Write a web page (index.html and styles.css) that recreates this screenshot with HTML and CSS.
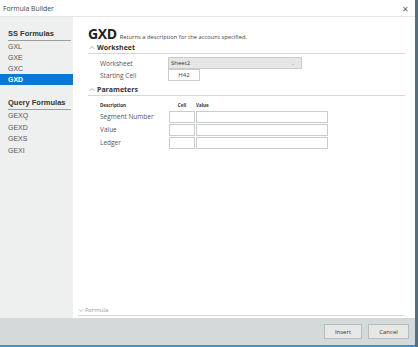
FILE: index.html
```html
<!DOCTYPE html>
<html lang="en">
<head>
    <meta charset="UTF-8">
    <title>Formula Builder</title>
    <link rel="stylesheet" href="styles.css">
</head>
<body>
    <div class="dialog">
        <div class="titlebar">
            <span class="title">Formula Builder</span>
            <span class="close">&#x2715;</span>
        </div>
        <div class="body">
            <aside class="sidebar">
                <div class="group-title">SS Formulas</div>
                <ul class="list">
                    <li>GXL</li>
                    <li>GXE</li>
                    <li>GXC</li>
                    <li class="active">GXD</li>
                </ul>
                <div class="group-title second">Query Formulas</div>
                <ul class="list tall">
                    <li>GEXQ</li>
                    <li>GEXD</li>
                    <li>GEXS</li>
                    <li>GEXI</li>
                </ul>
            </aside>
            <main class="main">
                <div class="heading">
                    <span class="fname">GXD</span>
                    <span class="fdesc">Returns a description for the account specified.</span>
                </div>

                <div class="section-head">
                    <svg class="caret" width="8" height="5" viewBox="0 0 8 5"><path d="M1.5 4 L4 1.5 L6.5 4" fill="none" stroke="#999" stroke-width="0.8"/></svg>Worksheet
                </div>
                <div class="field-row first">
                    <label>Worksheet</label>
                    <div class="select">Sheet2<span class="arrow">&#x2304;</span></div>
                </div>
                <div class="field-row">
                    <label>Starting Cell</label>
                    <div class="cell-input">H42</div>
                </div>

                <div class="section-head">
                    <svg class="caret" width="8" height="5" viewBox="0 0 8 5"><path d="M1.5 4 L4 1.5 L6.5 4" fill="none" stroke="#999" stroke-width="0.8"/></svg>Parameters
                </div>
                <div class="params">
                    <div class="ph">Description</div>
                    <div class="ph center">Cell</div>
                    <div class="ph">Value</div>

                    <div class="pl">Segment Number</div>
                    <div class="box"></div>
                    <div class="box"></div>

                    <div class="pl">Value</div>
                    <div class="box"></div>
                    <div class="box"></div>

                    <div class="pl">Ledger</div>
                    <div class="box"></div>
                    <div class="box"></div>
                </div>

                <div class="spacer"></div>
                <div class="formula-bar">
                    <svg class="caret" width="6" height="5" viewBox="0 0 6 5"><path d="M1 1.5 L3 3.5 L5 1.5" fill="none" stroke="#aaa" stroke-width="0.8"/></svg>Formula
                </div>
            </main>
        </div>
        <div class="footer">
            <button class="btn">Insert</button>
            <button class="btn">Cancel</button>
        </div>
    </div>
</body>
</html>
```

FILE: styles.css
```css
/* Base */
body {
    margin: 0;
    padding: 0;
    font-family: "Open Sans", "Noto Sans", Arial, sans-serif;
    background: #5a6f7c;
    color: #333;
}

.dialog {
    width: 415px;
    height: 345px;
    border-bottom: 2px solid #3f8fd0;
    background: #fff;
    display: flex;
    flex-direction: column;
}

/* Title bar */
.titlebar {
    height: 16px;
    display: flex;
    align-items: center;
    justify-content: space-between;
    padding: 0 6px 0 3px;
    background: #fff;
    border-bottom: 1px solid #e6e8e8;
}

.title {
    font-size: 6.8px;
    color: #444;
}

.close {
    font-size: 8px;
    color: #666;
}

.body {
    flex: 1;
    display: flex;
    min-height: 0;
}

/* Sidebar */
.sidebar {
    width: 73px;
    background: #eef0ef;
    padding-top: 12px;
}

.group-title {
    font-family: "Liberation Sans", Arial, sans-serif;
    font-weight: bold;
    font-size: 7.5px;
    color: #333;
    margin: 0 2px 0 8px;
    padding-bottom: 2px;
    border-bottom: 1px solid #9aa0a0;
}

.group-title.second {
    margin-top: 13px;
}

.list {
    list-style: none;
    margin: 0;
    padding: 0;
}

.list li {
    font-family: "Liberation Sans", Arial, sans-serif;
    font-size: 7px;
    color: #555;
    height: 11px;
    line-height: 11px;
    padding-left: 8px;
}

.list.tall li {
    height: 11.5px;
    line-height: 11.5px;
}

.list li.active {
    background: #0a78d4;
    color: #fff;
    font-weight: bold;
}

/* Main area */
.main {
    flex: 1;
    display: flex;
    flex-direction: column;
    padding: 9px 10px 0 5px;
}

.heading {
    display: flex;
    align-items: baseline;
    padding-left: 10px;
    height: 16px;
    line-height: 16px;
}

.fname {
    font-size: 14px;
    font-weight: bold;
    color: #222;
    letter-spacing: -0.4px;
}

.fdesc {
    font-size: 5.8px;
    color: #444;
    margin-left: 3px;
}

.section-head {
    display: flex;
    align-items: center;
    font-size: 7px;
    font-weight: bold;
    color: #333;
    margin-left: 10px;
    border-bottom: 1px solid #d4d8d8;
    height: 11px;
}

.caret {
    flex: none;
    margin-right: 1px;
}

.field-row {
    display: flex;
    align-items: center;
    height: 12px;
    margin-left: 22px;
}

.field-row.first {
    margin-top: 3px;
}

.field-row label {
    width: 68px;
    font-size: 6.5px;
    color: #555;
}

.select {
    width: 130px;
    height: 10px;
    line-height: 10px;
    border: 1px solid #c8cccc;
    background: #e6e6e6;
    font-size: 6px;
    color: #333;
    padding-left: 2px;
    display: flex;
    justify-content: space-between;
}

.arrow {
    font-size: 5px;
    color: #999;
    padding-right: 6px;
}

.cell-input {
    width: 30px;
    height: 10px;
    line-height: 10px;
    border: 1px solid #c8cccc;
    font-size: 6px;
    text-align: center;
    color: #444;
}

.field-row + .section-head {
    margin-top: 3px;
}

/* Parameters grid */
.params {
    display: grid;
    grid-template-columns: 68px 26px 132px;
    column-gap: 1px;
    row-gap: 1px;
    margin: 4px 0 0 22px;
}

.ph {
    font-size: 4.5px;
    font-weight: bold;
    color: #333;
    height: 10px;
    line-height: 10px;
}

.ph.center {
    text-align: center;
}

.pl {
    font-size: 6.5px;
    color: #555;
    height: 12px;
    line-height: 12px;
}

.box {
    height: 10px;
    border: 1px solid #c8cccc;
    background: #fff;
}

.spacer {
    flex: 1;
}

.formula-bar {
    display: flex;
    align-items: center;
    font-size: 6px;
    color: #999;
    border-bottom: 1px solid #d4d8d8;
    padding-bottom: 1px;
    margin-bottom: 2px;
}

/* Footer */
.footer {
    height: 27px;
    background: #d4dad9;
    display: flex;
    align-items: center;
    justify-content: flex-end;
    gap: 6px;
    padding-right: 6px;
}

.btn {
    font-family: "Open Sans", "Noto Sans", Arial, sans-serif;
    font-size: 6px;
    color: #333;
    background: #e6e8e8;
    border: 1px solid #b8bcbc;
    height: 15px;
    width: 38px;
    padding: 0;
}

.btn + .btn {
    width: 41px;
}
```
